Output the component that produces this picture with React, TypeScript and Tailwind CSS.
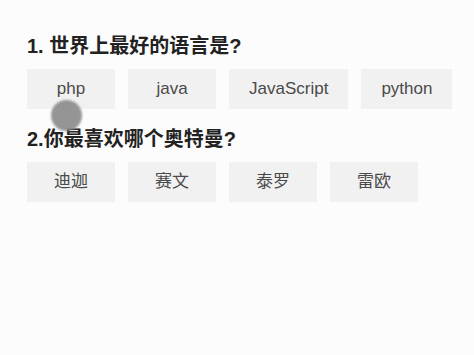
import React from 'react';

const questions = [
    { title: '1. 世界上最好的语言是?', options: ['php', 'java', 'JavaScript', 'python'] },
    { title: '2.你最喜欢哪个奥特曼?', options: ['迪迦', '赛文', '泰罗', '雷欧'] },
];

const App: React.FC = () => {
    return (
        <div
            className="relative min-h-[355px] w-full overflow-hidden bg-[#fcfcfc] px-[27px] pt-[32px]"
            style={{ fontFamily: '"Liberation Sans", "Noto Sans CJK SC", sans-serif' }}
        >
            {questions.map((q, qi) => (
                <div key={qi} className={qi > 0 ? 'mt-[16px]' : ''}>
                    <h2 className="text-[20px] font-bold leading-[28px] text-[#222]">{q.title}</h2>
                    <div className="mt-[9px] flex gap-[13px]">
                        {q.options.map((opt) => (
                            <button
                                key={opt}
                                className="h-[40px] min-w-[88px] shrink-0 bg-[#f1f1f1] px-[20px] text-[17px] text-[#4a4a4a]"
                            >
                                {opt}
                            </button>
                        ))}
                    </div>
                </div>
            ))}

            {/* click indicator */}
            <div className="absolute left-[51px] top-[100px] h-[31px] w-[31px] rounded-full bg-[#8a8a8a] opacity-90 blur-[1px]" />
        </div>
    );
};

export default App;
